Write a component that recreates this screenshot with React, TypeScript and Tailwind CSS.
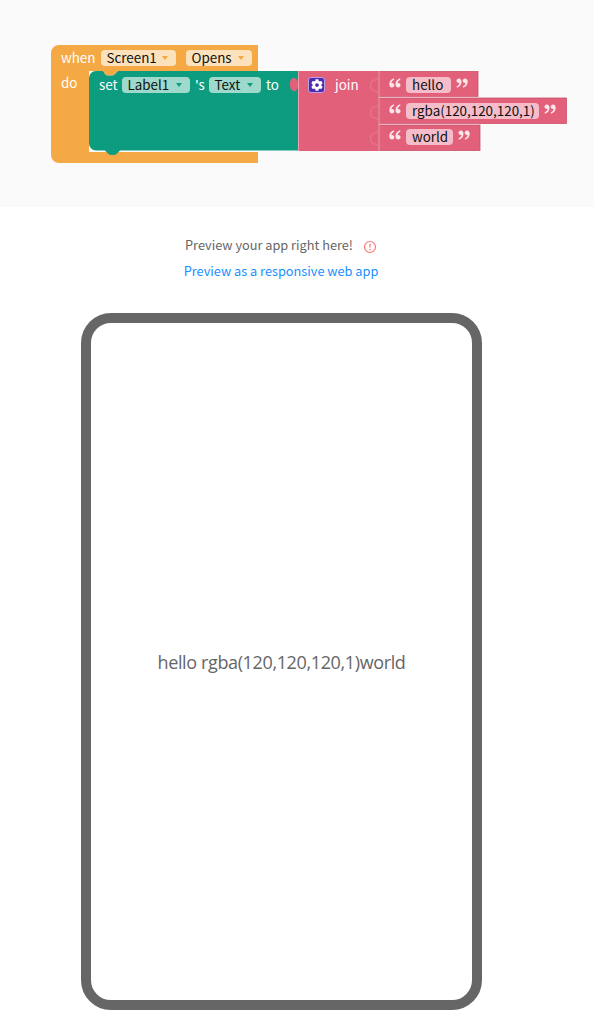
import { FaCog } from 'react-icons/fa';

const CJK = 'font-["Noto_Sans_CJK_SC","Noto_Sans",sans-serif]';

function Caret({ color }: { color: string }) {
  return (
    <svg width="6" height="4" viewBox="0 0 6 4" className="ml-auto mt-[2px] shrink-0">
      <path d="M0 0h6L3 4z" fill={color} />
    </svg>
  );
}

function Field({ label, className, tone }: { label: string; className: string; tone: 'orange' | 'teal' }) {
  const bg = tone === 'orange' ? 'bg-[#fbe2bc]' : 'bg-[#9ed9cb]';
  return (
    <div className={`flex h-4 shrink-0 items-center rounded-[4px] pb-[2px] pl-[5.500px] pr-[8px] text-[#111] ${bg} ${className}`}>
      <span>{label}</span>
      <Caret color={tone === 'orange' ? '#f5a83f' : '#0e9c80'} />
    </div>
  );
}

function Quote({ close }: { close?: boolean }) {
  return (
    <svg width="12" height="10" viewBox="0 0 12 10" className={`mt-[1px] shrink-0 ${close ? 'rotate-180' : ''}`}>
      <g fill="#fbe6ea">
        <path d="M4.800 0.300C2 1.300 0.300 3.300 0.300 6.300C0.300 8.200 1.300 9.500 2.900 9.500C4.300 9.500 5.300 8.500 5.300 7.200C5.300 5.900 4.300 5 3 5C2.700 5 2.500 5 2.300 5.100C2.600 3.700 3.600 2.500 5.300 1.500z" />
        <path d="M11 0.300C8.200 1.300 6.500 3.300 6.500 6.300C6.500 8.200 7.500 9.500 9.100 9.500C10.500 9.500 11.500 8.500 11.500 7.200C11.500 5.900 10.500 5 9.200 5C8.900 5 8.700 5 8.500 5.100C8.800 3.700 9.800 2.500 11.500 1.500z" />
      </g>
    </svg>
  );
}

function TextRow({ text, w }: { text: string; w: string }) {
  return (
    <div className="flex h-4 items-start gap-[5px]">
      <Quote />
      <div className={`flex h-4 items-center rounded-[4px] bg-[#f4bdc9] pb-[2px] pl-[6px] text-[#111] ${w}`}>{text}</div>
      <Quote close />
    </div>
  );
}

const ORANGE =
  'M59 45H258V71H118l-3 3c-1 1-2 1.500-3 1.500h-4c-1 0-2-.5-3-1.500l-2-3H89V152H258V163H59a8 8 0 0 1-8-8V53a8 8 0 0 1 8-8z';
const TEAL =
  'M96 71H103l2 3c1 1 2 1.500 3 1.500h4c1 0 2-.5 3-1.500l3-3H298V150.500H120l-3 3c-1 1-2 1.500-3 1.500h-3c-1 0-2-.5-3-1.500l-3-3H96a7 7 0 0 1-7-7V78a7 7 0 0 1 7-7z';
const PINK =
  'M298 71H379V151H298V88c-1.500 0-1 3-3 3c-3 0-5-1-5-6.500s2-6.500 5-6.500c2 0 1.500 3 3 3z';

function socket(y: number) {
  return `M378 ${y}c-1 1.500-2 2-3.500 2c-2.500 0-4 2-4 5.500s1.500 5.500 4 5.500c1.500 0 2.500 .5 3.500 2`;
}

function BlockDrawing() {
  return (
    <svg width="594" height="207" viewBox="0 0 594 207" className="[grid-area:1/1]">
      <path d={ORANGE} fill="#f5a945" />
      <path d={TEAL} fill="#0e9c80" />
      <path d={PINK} fill="#e2607a" />
      <path d="M298.500 71V151" stroke="#f2b3c0" strokeWidth="0.800" />
      <rect x="379" y="71.500" width="99" height="25" fill="#e2607a" stroke="#c9536c" strokeWidth="0.800" />
      <rect x="379" y="98" width="187.500" height="25.500" fill="#e2607a" stroke="#c9536c" strokeWidth="0.800" />
      <rect x="379" y="125" width="101" height="25.500" fill="#e2607a" stroke="#c9536c" strokeWidth="0.800" />
      <path d="M379 97.300H478M379 124.300H480" stroke="#f2b3c0" strokeWidth="0.800" />
      <path d="M379 71V151" fill="none" stroke="#f2b3c0" strokeWidth="0.800" />
      <path d={socket(78)} fill="none" stroke="#e98a9e" strokeWidth="0.700" />
      <path d={socket(105)} fill="none" stroke="#e98a9e" strokeWidth="0.700" />
      <path d={socket(131)} fill="none" stroke="#e98a9e" strokeWidth="0.700" />
    </svg>
  );
}

function BlockCanvas() {
  return (
    <div className={`grid h-[207px] bg-[#fafafa] text-[13.400px] leading-4 ${CJK}`}>
      <BlockDrawing />
      <div className="flex flex-col pl-[61px] pt-[50px] [grid-area:1/1]">
        <div className="flex">
          <span className="-mt-[1px] w-[40px] text-white">when</span>
          <Field label="Screen1" tone="orange" className="w-[75px]" />
          <Field label="Opens" tone="orange" className="ml-[10px] w-[65.500px]" />
        </div>
        <div className="mt-[11px] flex items-start">
          <span className="-mt-[3px] w-[38px] text-white">do</span>
          <span className="-mt-[1px] w-[23px] text-white">set</span>
          <Field label="Label1" tone="teal" className="w-[68px]" />
          <span className="-mt-[1px] ml-[5px] w-[14px] text-white">'s</span>
          <Field label="Text" tone="teal" className="w-[52px]" />
          <span className="-mt-[1px] ml-[5px] w-[42px] text-white">to</span>
          <div className="flex h-4 w-[17px] shrink-0 items-center justify-center rounded-[3px] border border-[#b9a0e0] bg-[#5029b3] text-white">
            <FaCog size={12} />
          </div>
          <span className="-mt-[1px] ml-[10px] w-[54px] text-white">join</span>
          <div className="flex flex-col gap-[10px]">
            <TextRow text="hello" w="w-[45px]" />
            <TextRow text="rgba(120,120,120,1)" w="w-[133px]" />
            <TextRow text="world" w="w-[47px]" />
          </div>
        </div>
      </div>
    </div>
  );
}

function InfoIcon() {
  return (
    <svg width="14" height="14" viewBox="0 0 14 14" className="shrink-0">
      <circle cx="7" cy="7" r="5.500" fill="none" stroke="#ff7875" strokeWidth="1.200" />
      <path d="M7 3.800v3.700" stroke="#ff7875" strokeWidth="1.300" />
      <circle cx="7" cy="9.600" r="0.800" fill="#ff7875" />
    </svg>
  );
}

export default function App() {
  return (
    <div className="h-[1024px] w-[594px] overflow-hidden bg-white">
      <BlockCanvas />
      <div className={`flex w-[562px] flex-col items-center pt-[28px] text-[12.750px] leading-5 ${CJK}`}>
        <div className="flex items-center gap-[10px] text-[#666]">
          <span>Preview your app right here!</span>
          <span className="mt-[3px]"><InfoIcon /></span>
        </div>
        <a className="mt-[6px] text-[#1890ff]">Preview as a responsive web app</a>
      </div>
      <div className="ml-[81px] mt-[32px] flex h-[697px] w-[401px] items-center justify-center rounded-[30px] border-[10px] border-[#666] bg-white">
        <span className="font-['Open_Sans',sans-serif] text-[18px] leading-6 tracking-[-0.37px] text-[#666]">
          hello rgba(120,120,120,1)world
        </span>
      </div>
    </div>
  );
}
